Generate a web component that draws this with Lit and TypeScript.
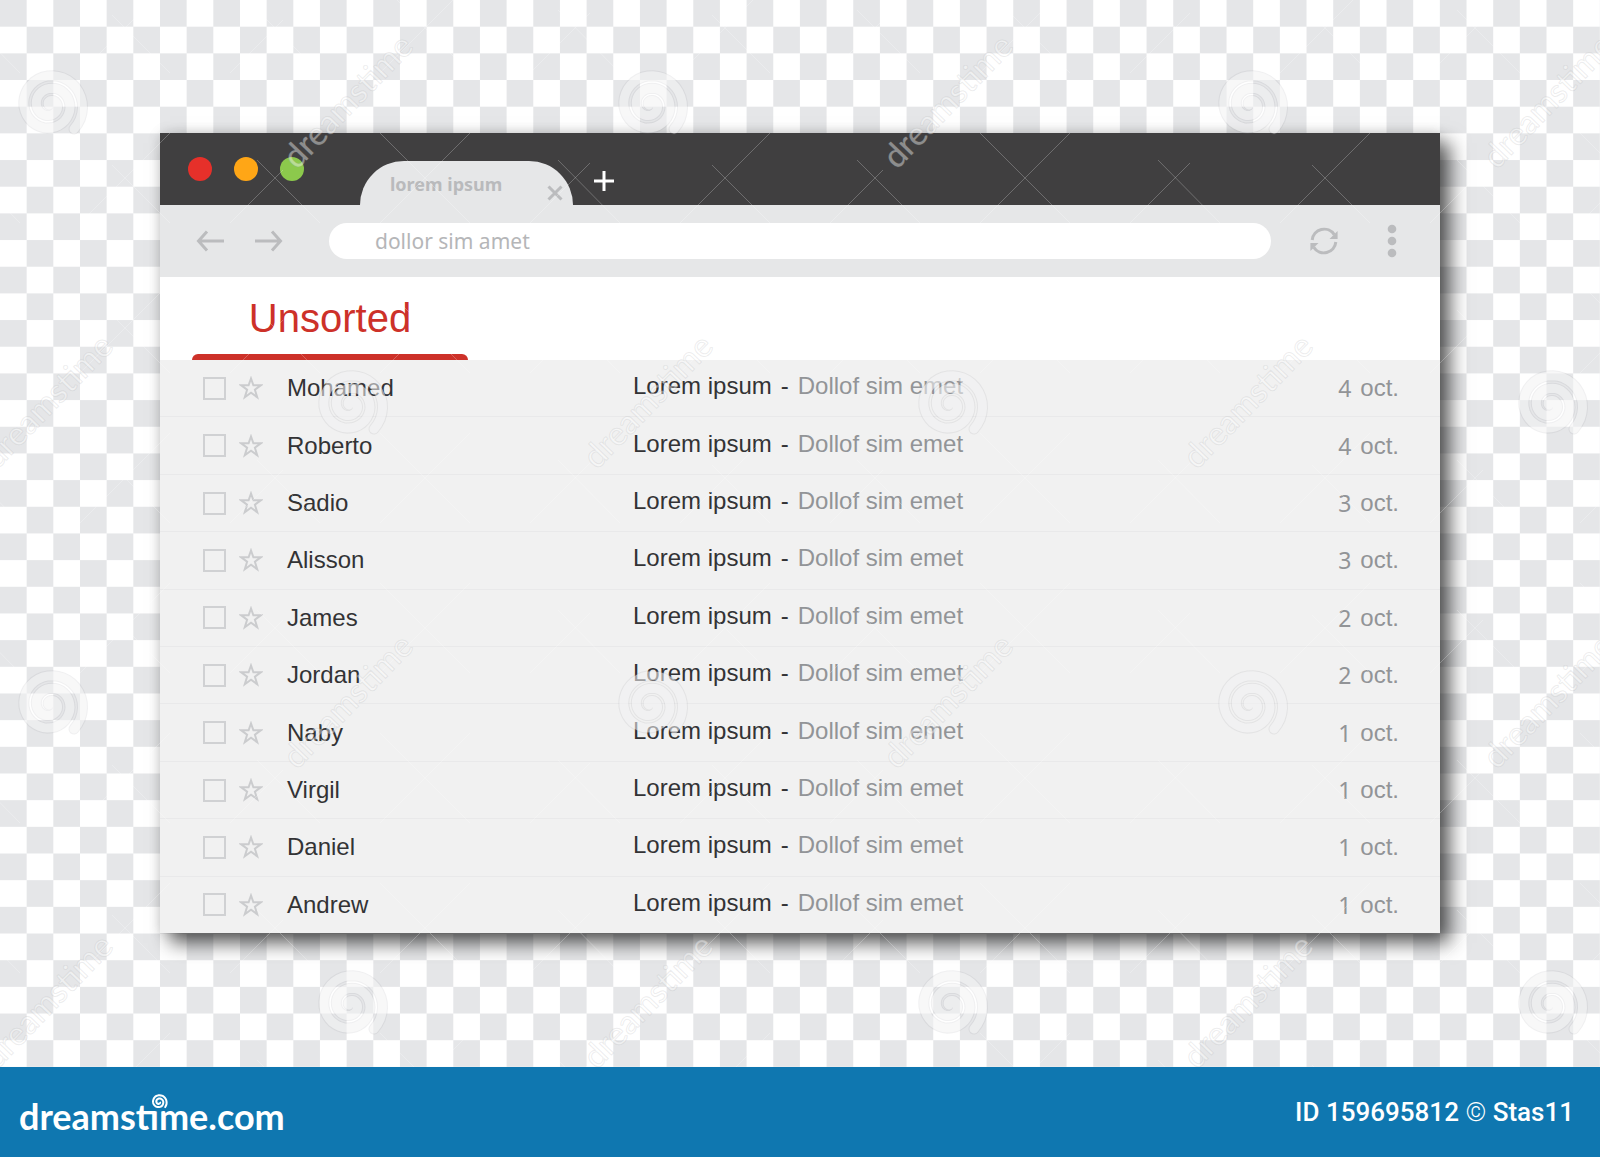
import { LitElement, html, css, svg } from "lit";
import { customElement } from "lit/decorators.js";

interface Mail {
  name: string;
  day: number;
}

const MAILS: Mail[] = [
  { name: "Mohamed", day: 4 },
  { name: "Roberto", day: 4 },
  { name: "Sadio", day: 3 },
  { name: "Alisson", day: 3 },
  { name: "James", day: 2 },
  { name: "Jordan", day: 2 },
  { name: "Naby", day: 1 },
  { name: "Virgil", day: 1 },
  { name: "Daniel", day: 1 },
  { name: "Andrew", day: 1 },
];

/** Archimedean spiral that unwinds clockwise from the centre and ends at 45 degrees. */
function spiral(cx: number, cy: number, radius: number, turns: number): string {
  const steps = Math.round(turns * 36);
  const start = (0.125 - turns) * 2 * Math.PI;
  let d = "";
  for (let i = 0; i <= steps; i++) {
    const t = i / steps;
    const a = start + t * turns * 2 * Math.PI;
    const r = 1 + (radius - 1) * t;
    d += `${i ? "L" : "M"}${(cx + r * Math.cos(a)).toFixed(1)} ${(cy + r * Math.sin(a)).toFixed(1)}`;
  }
  return d;
}

@customElement("stock-watermark")
export class StockWatermark extends LitElement {
  static styles = css`
    :host {
      display: block;
      pointer-events: none;
    }
    .sheet {
      display: block;
      width: 100%;
      height: 100%;
      overflow: hidden;
    }
    .edge {
      fill: none;
      stroke: #8a8c90;
      stroke-opacity: 0.13;
      stroke-width: 11;
      stroke-linecap: round;
    }
    .band {
      fill: none;
      stroke: #fff;
      stroke-opacity: 0.5;
      stroke-width: 9;
      stroke-linecap: round;
    }
    .word {
      font: 33px "Lato", sans-serif;
      fill: #fff;
      fill-opacity: 0.42;
      stroke: #a0a2a6;
      stroke-opacity: 0.2;
      stroke-width: 1;
      text-anchor: middle;
    }
    .line {
      stroke: #fff;
      stroke-opacity: 0.24;
      stroke-width: 1;
    }
  `;

  private mark(x: number, y: number) {
    const d = spiral(x, y, 34, 2.625);
    return svg`<path class="edge" d=${d}></path><path class="band" d=${d}></path>`;
  }

  private word(x: number, y: number) {
    return svg`<text class="word" x=${x} y=${y} transform="rotate(-46 ${x} ${y})">dreamstime</text>`;
  }

  render() {
    const cells: { x: number; y: number; odd: boolean }[] = [];
    for (let row = 0; row < 4; row++) {
      for (let col = 0; col < 6; col++) {
        cells.push({ x: 50 + col * 300, y: 105 + row * 300, odd: (row + col) % 2 === 1 });
      }
    }
    return html`
      <svg class="sheet" aria-hidden="true">
        <defs>
          <pattern id="lines" width="600" height="150" x="50" y="103" patternUnits="userSpaceOnUse">
            <path
              class="line"
              d="M30 120L120 30M62 62L120 120M180 120L233 67M207 57L270 120M330 120L420 30M330 30L420 120M480 120L540 60M508 57L570 120"
            ></path>
          </pattern>
        </defs>
        <rect width="100%" height="100%" fill="url(#lines)"></rect>
        ${cells.map((c) => (c.odd ? this.word(c.x + 6, c.y + 4) : this.mark(c.x, c.y)))}
      </svg>
    `;
  }
}

@customElement("mail-list")
export class MailList extends LitElement {
  static styles = css`
    :host {
      display: flex;
      flex-direction: column;
      background: #f1f1f1;
      color: #333335;
      font: 24px/28px "Liberation Sans", Arial, sans-serif;
    }
    .table,
    .body {
      flex: 1;
      display: flex;
      flex-direction: column;
    }
    .row {
      flex: 1;
      display: grid;
      grid-template-columns: 24px 24px minmax(120px, 382px) 1fr auto;
      align-items: center;
      min-height: 44px;
      padding: 0 41px 0 43px;
      border-bottom: 1px solid #e9e9ea;
      box-sizing: border-box;
    }
    .row:last-child {
      border-bottom: 0;
    }
    .cell {
      display: flex;
      align-items: center;
      padding: 0;
      white-space: nowrap;
    }
    .check {
      appearance: none;
      width: 23px;
      height: 23px;
      margin: 0;
      border: 2px solid #d0d1d3;
      background: transparent;
    }
    .check:checked {
      background: #d0d1d3;
    }
    .star {
      display: flex;
      margin-left: 12px;
      padding: 0;
      border: 0;
      background: none;
    }
    .icon {
      flex: none;
      width: 24px;
      height: 24px;
      fill: none;
      stroke: #cbccce;
      stroke-width: 2;
    }
    .name {
      padding-left: 36px;
    }
    .subject {
      gap: 9px;
      padding-bottom: 4px;
    }
    .preview,
    .date {
      color: #929497;
    }
    .date {
      gap: 9px;
    }
    .day {
      font-family: "Noto Sans", sans-serif;
      font-size: 23px;
    }
  `;

  render() {
    return html`
      <table class="table" aria-label="Unsorted">
        <tbody class="body">
          ${MAILS.map(
            (m) => html`
              <tr class="row">
                <td class="cell"><input class="check" type="checkbox" aria-label="Select ${m.name}" /></td>
                <td class="cell">
                  <button class="star" aria-label="Star ${m.name}">
                    <svg class="icon" viewBox="0 0 24 24">
                      <path d="M12 2.5L14.4 9.3H21.8L15.9 13.7L18.2 21.2L12 16.8L5.8 21.2L8.1 13.7L2.2 9.3H9.6Z"></path>
                    </svg>
                  </button>
                </td>
                <td class="cell name">${m.name}</td>
                <td class="cell subject">
                  <span>Lorem ipsum</span><span>-</span><span class="preview">Dollof sim emet</span>
                </td>
                <td class="cell date"><span class="day">${m.day}</span><span>oct.</span></td>
              </tr>
            `
          )}
        </tbody>
      </table>
    `;
  }
}

@customElement("browser-window")
export class BrowserWindow extends LitElement {
  static styles = css`
    :host {
      display: flex;
      flex-direction: column;
      background: #fff;
      box-shadow: 10px 10px 18px rgba(0, 0, 0, 0.64), 0 0 12px rgba(0, 0, 0, 0.12);
    }
    .titlebar {
      display: flex;
      align-items: flex-end;
      height: 72px;
      background: #403f40;
    }
    .lights {
      display: flex;
      gap: 22px;
      padding: 0 56px 24px 28px;
    }
    .light {
      width: 24px;
      height: 24px;
      padding: 0;
      border: 0;
      border-radius: 50%;
    }
    .red {
      background: #e6302a;
    }
    .amber {
      background: #ffa616;
    }
    .green {
      background: #8cc94c;
    }
    .tab {
      display: flex;
      justify-content: space-between;
      width: 213px;
      height: 44px;
      padding: 0 10px 0 30px;
      box-sizing: border-box;
      border-radius: 44px 44px 0 0;
      background: #e6e7e8;
      color: #b9babc;
      font: bold 18px/24px "Noto Sans", sans-serif;
    }
    .tab-title {
      padding-top: 11px;
    }
    .button {
      display: flex;
      padding: 0;
      border: 0;
      background: none;
    }
    .close {
      align-self: flex-end;
      padding-bottom: 4px;
    }
    .plus {
      margin: 0 0 14px 21px;
    }
    .icon {
      display: block;
      fill: none;
      stroke: #bbbcbe;
      stroke-width: 3;
    }
    .bright {
      stroke: #fff;
    }
    .solid {
      fill: #bbbcbe;
      stroke: none;
    }
    .toolbar {
      display: flex;
      align-items: center;
      height: 72px;
      padding: 0 43px 0 36px;
      box-sizing: border-box;
      background: #e6e7e8;
    }
    .arrows {
      display: flex;
      gap: 31px;
      padding-right: 46px;
    }
    .address {
      flex: 1;
      min-width: 0;
      height: 36px;
      padding: 0 46px;
      box-sizing: border-box;
      border: 0;
      border-radius: 18px;
      background: #fff;
      color: #b5b6b8;
      font: 21px/36px "Noto Sans", sans-serif;
    }
    .reload {
      padding: 0 48px 0 38px;
    }
    .header {
      display: flex;
      padding: 0 32px;
    }
    .section {
      display: flex;
      flex-direction: column;
      justify-content: flex-end;
      width: 276px;
      height: 83px;
      padding: 0;
      border: 0;
      background: none;
      color: #cd3129;
      font: 40px/48px "Liberation Sans", Arial, sans-serif;
      text-align: center;
    }
    .section::after {
      content: "";
      height: 6px;
      margin-top: 12px;
      align-self: stretch;
      border-radius: 6px 6px 0 0;
      background: #cd3129;
    }
    .label {
      align-self: center;
    }
    .list {
      flex: 1;
    }
  `;

  render() {
    return html`
      <div class="titlebar">
        <div class="lights">
          <button class="light red" aria-label="Close window"></button>
          <button class="light amber" aria-label="Minimize"></button>
          <button class="light green" aria-label="Maximize"></button>
        </div>
        <div class="tab">
          <span class="tab-title">lorem ipsum</span>
          <button class="button close" aria-label="Close tab">
            <svg class="icon" width="16" height="16" viewBox="0 0 16 16"><path d="M1.5 1.5L14.5 14.5M14.5 1.5L1.5 14.5"></path></svg>
          </button>
        </div>
        <button class="button plus" aria-label="New tab">
          <svg class="icon bright" width="20" height="20" viewBox="0 0 20 20"><path d="M10 0V20M0 10H20"></path></svg>
        </button>
      </div>
      <div class="toolbar">
        <div class="arrows">
          <button class="button" aria-label="Back">
            <svg class="icon" width="28" height="22" viewBox="0 0 28 22"><path d="M28 11H3M11 1.5L2.5 11L11 20.5"></path></svg>
          </button>
          <button class="button" aria-label="Forward">
            <svg class="icon" width="28" height="22" viewBox="0 0 28 22"><path d="M0 11H25M17 1.5L25.5 11L17 20.5"></path></svg>
          </button>
        </div>
        <input class="address" type="text" aria-label="Address" value="dollor sim amet" />
        <button class="button reload" aria-label="Reload">
          <svg class="icon" width="30" height="30" viewBox="0 0 30 30">
            <path d="M3.2 14A12 12 0 0 1 25.2 8.6M26.8 16A12 12 0 0 1 4.8 21.4"></path>
            <path class="solid" d="M28.6 5V13H20.5ZM1.4 25V17H9.5Z"></path>
          </svg>
        </button>
        <button class="button" aria-label="Menu">
          <svg class="icon" width="10" height="34" viewBox="0 0 10 34">
            <g class="solid"><circle cx="5" cy="5" r="4.3"></circle><circle cx="5" cy="17" r="4.3"></circle><circle cx="5" cy="29" r="4.3"></circle></g>
          </svg>
        </button>
      </div>
      <div class="header"><button class="section"><span class="label">Unsorted</span></button></div>
      <mail-list class="list"></mail-list>
    `;
  }
}

@customElement("app-root")
export class AppRoot extends LitElement {
  static styles = css`
    :host {
      display: flex;
      flex-direction: column;
      min-height: 100vh;
      background: #fff;
    }
    .stage {
      position: relative;
      flex: 1;
      display: flex;
      padding: 133px 10% 134px;
      background: conic-gradient(#fff 25%, #e5e6e8 0 50%, #fff 0 75%, #e5e6e8 0) 0 0 / calc(100% / 30) calc(100% / 20);
    }
    .window {
      flex: 1;
      min-width: 0;
    }
    .watermark {
      position: absolute;
      inset: 0;
    }
    .footer {
      display: flex;
      align-items: center;
      justify-content: space-between;
      height: 90px;
      padding: 0 26px 0 19px;
      box-sizing: border-box;
      background: #0f77b0;
      color: #fff;
      font: 500 26px/30px Roboto, sans-serif;
    }
    .logo {
      padding-top: 8px;
      color: #fff;
      font: bold 36px/44px "Lato", sans-serif;
      text-decoration: none;
    }
    .dot {
      position: relative;
    }
    .curl {
      position: absolute;
      left: 50%;
      top: -2px;
      width: 20px;
      height: 20px;
      margin-left: -10px;
    }
    .credit {
      margin: 0;
    }
    .copy {
      font-weight: 300;
    }
  `;

  render() {
    return html`
      <main class="stage">
        <browser-window class="window"></browser-window>
        <stock-watermark class="watermark"></stock-watermark>
      </main>
      <footer class="footer">
        <a class="logo" href="#">dreamst<span class="dot">i<svg class="curl" viewBox="0 0 20 20" aria-hidden="true"><circle cx="10" cy="10" r="10" fill="#0f77b0"></circle><path d=${spiral(10, 10, 8, 2.125)} fill="none" stroke="#fff" stroke-width="2"></path></svg></span>me.com</a>
        <p class="credit">ID 159695812 <span class="copy">©</span> Stas11</p>
      </footer>
    `;
  }
}
